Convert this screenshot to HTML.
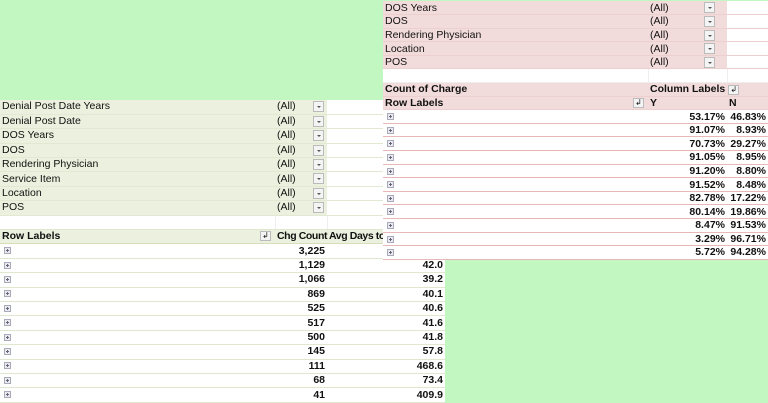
<!DOCTYPE html>
<html><head><meta charset="utf-8"><style>
*{margin:0;padding:0;box-sizing:border-box}
body{width:768px;height:402px;background:#c3f7c1;position:relative;overflow:hidden;font-family:"Liberation Sans",Arial,sans-serif;font-size:10.5px;color:#111}
.p{position:absolute;border-collapse:collapse;table-layout:fixed}
.p td{white-space:nowrap;overflow:hidden;padding:0 2px;vertical-align:middle}
.b{font-weight:bold}
.r{text-align:right}
.ov{overflow:visible!important;letter-spacing:-0.4px}
.dd{display:inline-block;width:11px;height:11px;border:1px solid #bbb;background:#f4f4f4;vertical-align:middle;position:relative}
.dd:after{content:"";position:absolute;left:3px;top:4px;border-left:2px solid transparent;border-right:2px solid transparent;border-top:2px solid #555}
.ex{display:inline-block;width:7px;height:7px;border:1px solid #aab;background:#e8eaf0;position:relative;vertical-align:middle;margin-left:2px}
.ex:before{content:"";position:absolute;left:1px;top:2px;width:3px;height:1px;background:#667}
.ex:after{content:"";position:absolute;left:2px;top:1px;width:1px;height:3px;background:#667}
.L td{height:14.4px;line-height:13px}
.L .f td{background:#ebf1de;border-bottom:1px solid #e2e9d3}
.L .f td.w{background:#fff}
.L .d td{background:#fff;border-bottom:1px solid #dfe8cf}
.L .h td{background:#ebf1de;border-bottom:1px solid #d4deb8}
.R td{height:13.6px;line-height:12px}
.R .f td{background:#f2dcdb;border-bottom:1px solid #ecd0cf}
.R .f td.w{background:#fff}
.R .d td{background:#fff;border-bottom:1px solid #e6b8b7}
.sa{display:inline-block;width:11px;height:10px;border:1px solid #bbb;background:#f4f4f4;font-size:8px;text-align:center;line-height:8px;vertical-align:middle;font-weight:normal}
</style></head><body>
<table class="p L" style="left:0;top:100px;width:445px">
<colgroup><col style="width:275px"><col style="width:52px"><col style="width:118px"></colgroup>
<tr class="f"><td>Denial Post Date Years</td><td>(All)&nbsp;&nbsp;&nbsp;&nbsp;&nbsp;&nbsp;<span class="dd"></span></td><td class="w"></td></tr>
<tr class="f"><td>Denial Post Date</td><td>(All)&nbsp;&nbsp;&nbsp;&nbsp;&nbsp;&nbsp;<span class="dd"></span></td><td class="w"></td></tr>
<tr class="f"><td>DOS Years</td><td>(All)&nbsp;&nbsp;&nbsp;&nbsp;&nbsp;&nbsp;<span class="dd"></span></td><td class="w"></td></tr>
<tr class="f"><td>DOS</td><td>(All)&nbsp;&nbsp;&nbsp;&nbsp;&nbsp;&nbsp;<span class="dd"></span></td><td class="w"></td></tr>
<tr class="f"><td>Rendering Physician</td><td>(All)&nbsp;&nbsp;&nbsp;&nbsp;&nbsp;&nbsp;<span class="dd"></span></td><td class="w"></td></tr>
<tr class="f"><td>Service Item</td><td>(All)&nbsp;&nbsp;&nbsp;&nbsp;&nbsp;&nbsp;<span class="dd"></span></td><td class="w"></td></tr>
<tr class="f"><td>Location</td><td>(All)&nbsp;&nbsp;&nbsp;&nbsp;&nbsp;&nbsp;<span class="dd"></span></td><td class="w"></td></tr>
<tr class="f"><td>POS</td><td>(All)&nbsp;&nbsp;&nbsp;&nbsp;&nbsp;&nbsp;<span class="dd"></span></td><td class="w"></td></tr>
<tr class="d"><td style="border-right:1px solid #eee"></td><td style="border-right:1px solid #eee"></td><td></td></tr>
<tr class="h b"><td>Row Labels<span class="sa" style="float:right;margin:1px 2px 0 0">&#8626;</span></td><td class="ov">Chg Count</td><td class="ov">Avg Days to Denial</td></tr>
<tr class="d b"><td><span class="ex"></span></td><td class="r">3,225</td><td class="r"></td></tr>
<tr class="d b"><td><span class="ex"></span></td><td class="r">1,129</td><td class="r">42.0</td></tr>
<tr class="d b"><td><span class="ex"></span></td><td class="r">1,066</td><td class="r">39.2</td></tr>
<tr class="d b"><td><span class="ex"></span></td><td class="r">869</td><td class="r">40.1</td></tr>
<tr class="d b"><td><span class="ex"></span></td><td class="r">525</td><td class="r">40.6</td></tr>
<tr class="d b"><td><span class="ex"></span></td><td class="r">517</td><td class="r">41.6</td></tr>
<tr class="d b"><td><span class="ex"></span></td><td class="r">500</td><td class="r">41.8</td></tr>
<tr class="d b"><td><span class="ex"></span></td><td class="r">145</td><td class="r">57.8</td></tr>
<tr class="d b"><td><span class="ex"></span></td><td class="r">111</td><td class="r">468.6</td></tr>
<tr class="d b"><td><span class="ex"></span></td><td class="r">68</td><td class="r">73.4</td></tr>
<tr class="d b"><td><span class="ex"></span></td><td class="r">41</td><td class="r">409.9</td></tr>
</table>
<table class="p R" style="left:383px;top:1px;width:385px">
<colgroup><col style="width:265px"><col style="width:79px"><col style="width:41px"></colgroup>
<tr class="f"><td>DOS Years</td><td>(All)&nbsp;&nbsp;&nbsp;&nbsp;&nbsp;&nbsp;&nbsp;&nbsp;&nbsp;&nbsp;&nbsp;&nbsp;<span class="dd"></span></td><td class="w"></td></tr>
<tr class="f"><td>DOS</td><td>(All)&nbsp;&nbsp;&nbsp;&nbsp;&nbsp;&nbsp;&nbsp;&nbsp;&nbsp;&nbsp;&nbsp;&nbsp;<span class="dd"></span></td><td class="w"></td></tr>
<tr class="f"><td>Rendering Physician</td><td>(All)&nbsp;&nbsp;&nbsp;&nbsp;&nbsp;&nbsp;&nbsp;&nbsp;&nbsp;&nbsp;&nbsp;&nbsp;<span class="dd"></span></td><td class="w"></td></tr>
<tr class="f"><td>Location</td><td>(All)&nbsp;&nbsp;&nbsp;&nbsp;&nbsp;&nbsp;&nbsp;&nbsp;&nbsp;&nbsp;&nbsp;&nbsp;<span class="dd"></span></td><td class="w"></td></tr>
<tr class="f"><td>POS</td><td>(All)&nbsp;&nbsp;&nbsp;&nbsp;&nbsp;&nbsp;&nbsp;&nbsp;&nbsp;&nbsp;&nbsp;&nbsp;<span class="dd"></span></td><td class="w"></td></tr>
<tr class="d"><td style="border-right:1px solid #eee;border-bottom:1px solid #eee"></td><td style="border-right:1px solid #eee;border-bottom:1px solid #eee"></td><td style="border-bottom:1px solid #eee"></td></tr>
<tr class="f b"><td>Count of Charge</td><td colspan="2">Column Labels <span class="sa">&#8626;</span></td></tr>
<tr class="f b"><td>Row Labels<span class="sa" style="float:right;margin:1px 2px 0 0">&#8626;</span></td><td>Y</td><td>N</td></tr>
<tr class="d b"><td><span class="ex"></span></td><td class="r">53.17%</td><td class="r">46.83%</td></tr>
<tr class="d b"><td><span class="ex"></span></td><td class="r">91.07%</td><td class="r">8.93%</td></tr>
<tr class="d b"><td><span class="ex"></span></td><td class="r">70.73%</td><td class="r">29.27%</td></tr>
<tr class="d b"><td><span class="ex"></span></td><td class="r">91.05%</td><td class="r">8.95%</td></tr>
<tr class="d b"><td><span class="ex"></span></td><td class="r">91.20%</td><td class="r">8.80%</td></tr>
<tr class="d b"><td><span class="ex"></span></td><td class="r">91.52%</td><td class="r">8.48%</td></tr>
<tr class="d b"><td><span class="ex"></span></td><td class="r">82.78%</td><td class="r">17.22%</td></tr>
<tr class="d b"><td><span class="ex"></span></td><td class="r">80.14%</td><td class="r">19.86%</td></tr>
<tr class="d b"><td><span class="ex"></span></td><td class="r">8.47%</td><td class="r">91.53%</td></tr>
<tr class="d b"><td><span class="ex"></span></td><td class="r">3.29%</td><td class="r">96.71%</td></tr>
<tr class="d b"><td><span class="ex"></span></td><td class="r">5.72%</td><td class="r">94.28%</td></tr>
</table>
</body></html>
